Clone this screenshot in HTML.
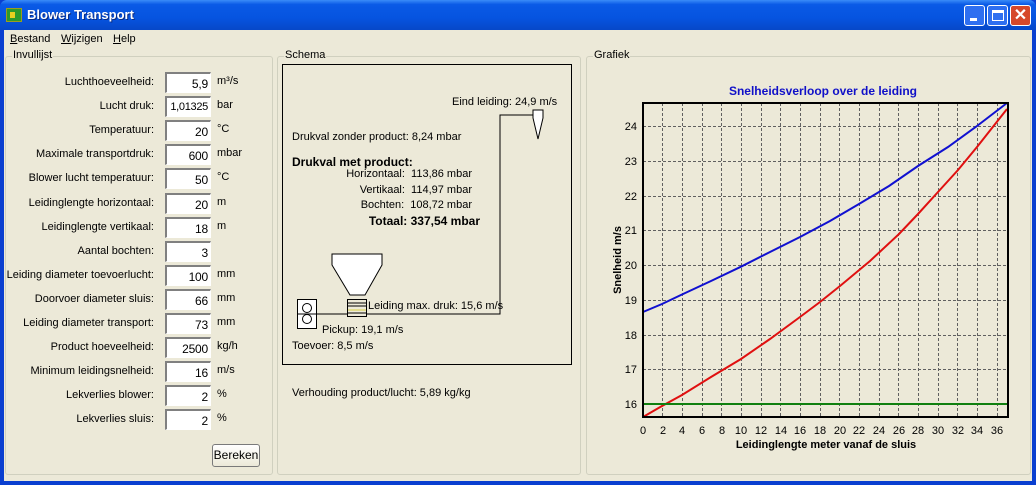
<!DOCTYPE html>
<html><head><meta charset="utf-8"><style>
*{margin:0;padding:0;box-sizing:border-box}
body{width:1036px;height:485px;overflow:hidden;background:#0a3fd0;font-family:"Liberation Sans",sans-serif;font-size:11px;color:#000;position:relative}
.abs{position:absolute;white-space:nowrap}
#title{position:absolute;left:0;top:0;width:1036px;height:30px;background:linear-gradient(#3a8cf8 0%,#0a5ae6 15%,#0654e0 60%,#0648c8 100%);border-radius:7px 7px 0 0}
#client{position:absolute;left:4px;top:30px;width:1028px;height:451px;background:#ece9d8}
.grp{position:absolute;border:1px solid #d0d0bf;border-radius:3px}
.gl{position:absolute;top:-8px;left:6px;background:#ece9d8;padding:0 1px;font-size:11px}
.inp{position:absolute;width:46px;height:21px;background:#fff;border-top:2px solid #808080;border-left:2px solid #808080;border-right:1px solid #fff;border-bottom:1px solid #fff;text-align:right;padding:3px 2px 0 0;font-size:12px;letter-spacing:-0.2px}
.btn{position:absolute;width:21px;height:21px;border:1px solid #fff;border-radius:3px;top:5px}
</style></head><body>
<div id="title">
 <div class="abs" style="left:6px;top:8px;width:16px;height:14px;background:#2c9a2c;border:1px solid #9c9c20"><div style="position:absolute;left:3px;top:3px;width:5px;height:6px;background:#e8d020"></div></div>
 <div class="abs" style="left:27px;top:7px;color:#fff;font-weight:bold;font-size:13px;text-shadow:1px 1px #0a2a80">Blower Transport</div>
 <div class="btn" style="left:964px;background:#2e6ff0"><div style="position:absolute;left:5px;top:12px;width:7px;height:3px;background:#fff"></div></div>
 <div class="btn" style="left:987px;background:#2e6ff0"><div style="position:absolute;left:4px;top:4px;width:12px;height:11px;border:1px solid #fff;border-top:3px solid #fff"></div></div>
 <div class="btn" style="left:1010px;background:#d6482a;color:#fff;font-weight:bold;font-size:16px;text-align:center;line-height:19px">✕</div>
</div>
<div id="client">
 <div class="abs" style="left:6px;top:3px"><u>B</u>estand</div>
 <div class="abs" style="left:57px;top:3px"><u>W</u>ijzigen</div>
 <div class="abs" style="left:109px;top:3px"><u>H</u>elp</div>
</div>
<div class="grp" style="left:5px;top:56px;width:268px;height:419px"><span class="gl">Invullijst</span></div>
<div class="grp" style="left:277px;top:56px;width:304px;height:419px"><span class="gl">Schema</span></div>
<div class="grp" style="left:586px;top:56px;width:445px;height:419px"><span class="gl">Grafiek</span></div>

<div id="fields"></div>
<div class="abs" style="left:212px;top:444px;width:48px;height:23px;border:1px solid #7a7a7a;border-radius:3px;background:linear-gradient(#fff,#ece9d8);text-align:center;line-height:21px;font-size:12px">Bereken</div>

<!-- schema -->
<div class="abs" style="left:282px;top:64px;width:290px;height:301px;border:1px solid #000"></div>
<svg class="abs" style="left:0;top:0" width="1036" height="485">
 <polyline points="316,314 500,314 500,115 533,115" fill="none" stroke="#000"/>
 <polygon points="533,110 543,110 543,118 538,139 533,118" fill="#fff" stroke="#000"/>
 <rect x="297.5" y="299.5" width="19" height="29" fill="#fff" stroke="#000"/>
 <circle cx="307" cy="308" r="4.5" fill="none" stroke="#000"/><circle cx="307" cy="319" r="4.5" fill="none" stroke="#000"/>
 <line x1="297" y1="314" x2="317" y2="314" stroke="#000"/>
 <polygon points="332,254 382,254 382,265 365,295 350,295 332,265" fill="#fff" stroke="#000"/>
 <rect x="347.5" y="299.5" width="19" height="17" fill="#ece9d8" stroke="#000"/>
 <line x1="348" y1="303" x2="366" y2="303" stroke="#000"/><line x1="348" y1="306" x2="366" y2="306" stroke="#000"/><line x1="348" y1="310" x2="366" y2="310" stroke="#d8d040"/><line x1="348" y1="313" x2="366" y2="313" stroke="#000"/>
</svg>
<div class="abs" style="left:452px;top:96px">Eind leiding: 24,9 m/s</div>
<div class="abs" style="left:292px;top:131px">Drukval zonder product: 8,24 mbar</div>
<div class="abs" style="left:292px;top:155px;font-weight:bold;font-size:12px">Drukval met product:</div>
<div class="abs" style="left:300px;top:168px;width:172px;text-align:right">Horizontaal:&nbsp; 113,86 mbar</div>
<div class="abs" style="left:300px;top:184px;width:172px;text-align:right">Vertikaal:&nbsp; 114,97 mbar</div>
<div class="abs" style="left:300px;top:199px;width:172px;text-align:right">Bochten:&nbsp; 108,72 mbar</div>
<div class="abs" style="left:300px;top:214px;width:180px;text-align:right;font-weight:bold;font-size:12px">Totaal: 337,54 mbar</div>
<div class="abs" style="left:368px;top:300px">Leiding max. druk: 15,6 m/s</div>
<div class="abs" style="left:322px;top:324px">Pickup: 19,1 m/s</div>
<div class="abs" style="left:292px;top:340px">Toevoer: 8,5 m/s</div>
<div class="abs" style="left:292px;top:387px">Verhouding product/lucht: 5,89 kg/kg</div>

<!-- chart -->
<svg class="abs" style="left:0;top:0" width="1036" height="485" font-family="Liberation Sans, sans-serif" font-size="11">
 <text x="823" y="95" text-anchor="middle" fill="#1010c8" font-weight="bold" font-size="12">Snelheidsverloop over de leiding</text>
 <rect x="643" y="103" width="365" height="314" fill="#ece9d8"/>
 <g stroke="#606060" stroke-dasharray="3,2" stroke-width="1">
  <path d="M662.5 103V417M682.5 103V417M702.5 103V417M721.5 103V417M741.5 103V417M761.5 103V417M780.5 103V417M800.5 103V417M820.5 103V417M839.5 103V417M859.5 103V417M879.5 103V417M898.5 103V417M918.5 103V417M938.5 103V417M957.5 103V417M977.5 103V417M997.5 103V417"/>
  <path d="M643 126.5H1008M643 161.5H1008M643 196.5H1008M643 230.5H1008M643 265.5H1008M643 300.5H1008M643 335.5H1008M643 369.5H1008"/>
 </g>
 <polyline fill="none" stroke="#1010d0" stroke-width="2" points="643,312 662,304 682,294.5 711,281 741,266.7 770,252 800,237 830,221 859,204 889,186 918,166 948,147 977,126 1007,103"/>
 <polyline fill="none" stroke="#e01010" stroke-width="2" points="643,417 662,406 682,395 711,377 741,359 770,339 800,317 820,302 840,286 870,261 899,234 918,214 938,192 958,170 977,147 1007,109"/>
 <line x1="643" y1="404" x2="1008" y2="404" stroke="#108010" stroke-width="2"/>
 <rect x="643" y="103" width="365" height="314" fill="none" stroke="#000" stroke-width="2"/>
 <g text-anchor="end">
  <text x="637" y="130">24</text><text x="637" y="165">23</text><text x="637" y="200">22</text><text x="637" y="234">21</text><text x="637" y="269">20</text><text x="637" y="304">19</text><text x="637" y="339">18</text><text x="637" y="373">17</text><text x="637" y="408">16</text>
 </g>
 <g text-anchor="middle">
  <text x="643" y="434">0</text><text x="663" y="434">2</text><text x="682" y="434">4</text><text x="702" y="434">6</text><text x="722" y="434">8</text><text x="741" y="434">10</text><text x="761" y="434">12</text><text x="781" y="434">14</text><text x="800" y="434">16</text><text x="820" y="434">18</text><text x="840" y="434">20</text><text x="859" y="434">22</text><text x="879" y="434">24</text><text x="899" y="434">26</text><text x="918" y="434">28</text><text x="938" y="434">30</text><text x="958" y="434">32</text><text x="977" y="434">34</text><text x="997" y="434">36</text>
  <text x="826" y="448" font-weight="bold">Leidinglengte meter vanaf de sluis</text>
  <text transform="translate(621,260) rotate(-90)" font-weight="bold">Snelheid m/s</text>
 </g>
</svg>
<script>
var d=[["Luchthoeveelheid:","5,9","m³/s"],["Lucht druk:","1,01325","bar"],["Temperatuur:","20","°C"],["Maximale transportdruk:","600","mbar"],["Blower lucht temperatuur:","50","°C"],["Leidinglengte horizontaal:","20","m"],["Leidinglengte vertikaal:","18","m"],["Aantal bochten:","3",""],["Leiding diameter toevoerlucht:","100","mm"],["Doorvoer diameter sluis:","66","mm"],["Leiding diameter transport:","73","mm"],["Product hoeveelheid:","2500","kg/h"],["Minimum leidingsnelheid:","16","m/s"],["Lekverlies blower:","2","%"],["Lekverlies sluis:","2","%"]];
var h="";d.forEach(function(r,i){var y=72+i*24.1;
h+='<div class="abs" style="left:0;top:'+(y+4)+'px;width:154px;text-align:right">'+r[0]+'</div>';
h+='<div class="inp" style="left:165px;top:'+y+'px'+(r[1].length>5?';font-size:11px;letter-spacing:-0.3px':'')+'">'+r[1]+'</div>';
h+='<div class="abs" style="left:217px;top:'+(y+3)+'px">'+r[2]+'</div>';});
document.getElementById("fields").innerHTML=h;
</script>
</body></html>
